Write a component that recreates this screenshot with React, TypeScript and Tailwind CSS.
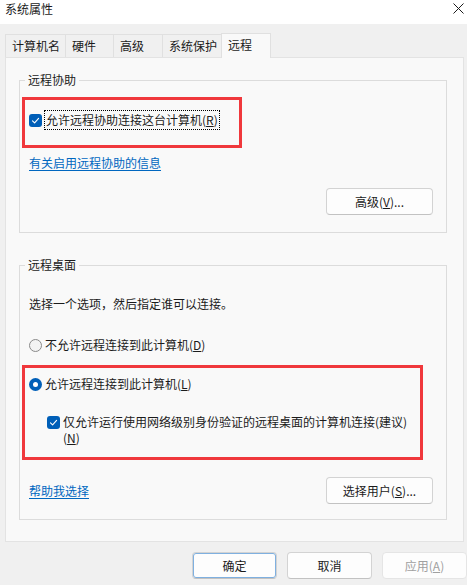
import React from 'react';

const Mn: React.FC<{ k: string }> = ({ k }) => (
  <>
    (<span className="underline underline-offset-[1px]">{k}</span>)
  </>
);

const CheckBox: React.FC<{ className?: string }> = ({ className = '' }) => (
  <span className={`w-[13px] h-[13px] shrink-0 rounded-[3px] bg-[#005fb8] flex items-center justify-center ${className}`}>
    <svg width="9" height="9" viewBox="0 0 9 9" fill="none">
      <path d="M1.5 4.8 L3.6 6.8 L7.6 2.4" stroke="white" strokeWidth="1.1" strokeLinecap="round" strokeLinejoin="round" />
    </svg>
  </span>
);

const Radio: React.FC<{ checked?: boolean }> = ({ checked }) =>
  checked ? (
    <span className="w-[13px] h-[13px] shrink-0 rounded-full bg-[#005fb8] flex items-center justify-center">
      <span className="w-[5px] h-[5px] rounded-full bg-white" />
    </span>
  ) : (
    <span className="w-[13px] h-[13px] shrink-0 rounded-full border border-[#8a8a8a] bg-[#f3f3f3]" />
  );

const Btn: React.FC<{ children: React.ReactNode; className?: string }> = ({ children, className = '' }) => (
  <div
    className={`h-[27px] flex items-center justify-center rounded-[4px] border border-[#d3d3d3] border-b-[#c2c2c2] bg-[#fdfdfd] text-[#1b1b1b] ${className}`}
  >
    {children}
  </div>
);

const Group: React.FC<{ title: string; children: React.ReactNode; className?: string }> = ({ title, children, className = '' }) => (
  <fieldset className={`w-[428px] border border-[#dcdcdc] ${className}`}>
    <legend className="ml-[5px] px-[3px] leading-[16px]">{title}</legend>
    {children}
  </fieldset>
);

const tabs = [
  { label: '计算机名', w: 'w-[61px]' },
  { label: '硬件', w: 'w-[49px]' },
  { label: '高级', w: 'w-[50px]' },
  { label: '系统保护', w: 'w-[60px]' },
];

export default function App() {
  return (
    <div className="w-[467px] h-[585px] overflow-hidden bg-[#f0f0f0] text-[12px] leading-[16px] text-[#1b1b1b] font-['Noto_Sans_CJK_SC','Noto_Sans',sans-serif]">
      {/* title bar */}
      <div className="h-[24px] bg-white flex items-start justify-between pl-[5px] pr-[3px]">
        <span className="mt-[1px]">系统属性</span>
        <svg width="11" height="11" viewBox="0 0 11 11" className="mt-[3px]">
          <path d="M0.5 0.5 L10.5 10.5 M10.5 0.5 L0.5 10.5" stroke="#1b1b1b" strokeWidth="1" />
        </svg>
      </div>

      {/* tabs */}
      <div className="mt-[9px] h-[24px] px-[5px] flex items-end">
        {tabs.map(t => (
          <div
            key={t.label}
            className={`${t.w} h-[23px] -mr-px pl-[6px] pt-[3px] border border-b-0 border-[#e0e0e0] bg-[#f0f0f0]`}
          >
            {t.label}
          </div>
        ))}
        <div className="relative z-10 w-[50px] h-[25px] -mb-px pl-[6px] pt-[3px] border border-b-0 border-[#e0e0e0] bg-[#f9f9f9]">
          远程
        </div>
      </div>

      {/* page */}
      <div className="mx-[5px] w-[459px] h-[485px] border border-[#e3e3e3] bg-[#f9f9f9] pl-[13px] pt-[14px]">
        <Group title="远程协助">
          <div className="mt-[9px] ml-[2px] w-[220px] border-[3px] border-[#f0383c] pl-[4px] pt-[10px] pb-[15px]">
            <div className="h-[20px] flex items-center">
              <CheckBox />
              <span className="ml-[2px] h-[20px] flex items-center px-[1px] border border-dotted border-black">
                允许远程协助连接这台计算机<Mn k="R" />
              </span>
            </div>
          </div>
          <div className="mt-[7px] pl-[9px]">
            <span className="text-[#0067c0] underline underline-offset-2">有关启用远程协助的信息</span>
          </div>
          <div className="mt-[17px] pb-[17px] pr-[13px] flex justify-end">
            <Btn className="w-[107px]">
              高级<Mn k="V" />...
            </Btn>
          </div>
        </Group>

        <Group title="远程桌面" className="mt-[24px]">
          <div className="mt-[23px] pl-[9px]">选择一个选项，然后指定谁可以连接。</div>
          <div className="mt-[23px] pl-[9px] h-[20px] flex items-center gap-[3px]">
            <Radio />
            <span>
              不允许远程连接到此计算机<Mn k="D" />
            </span>
          </div>
          <div className="mt-[10px] ml-[2px] w-[401px] border-[3px] border-[#f0383c] pl-[4px] pt-[6px] pb-[11px]">
            <div className="h-[20px] flex items-center gap-[3px]">
              <Radio checked />
              <span>
                允许远程连接到此计算机<Mn k="L" />
              </span>
            </div>
            <div className="mt-[20px] ml-[18px] flex items-start gap-[3px]">
              <CheckBox className="mt-[2px]" />
              <span>
                仅允许运行使用网络级别身份验证的远程桌面的计算机连接(建议)
                <br />
                <Mn k="N" />
              </span>
            </div>
          </div>
          <div className="mt-[17px] pb-[15px] pl-[9px] pr-[13px] flex items-center justify-between">
            <span className="text-[#0067c0] underline underline-offset-2">帮助我选择</span>
            <Btn className="w-[107px]">
              选择用户<Mn k="S" />...
            </Btn>
          </div>
        </Group>
      </div>

      {/* dialog buttons */}
      <div className="mt-[10px] pl-[192px] flex gap-[10px]">
        <Btn className="w-[85px] shrink-0 border-[#0067c0] border-b-[#0067c0] shadow-[inset_0_0_0_1px_#7fb0e0]">确定</Btn>
        <Btn className="w-[85px] shrink-0">取消</Btn>
        <Btn className="w-[85px] shrink-0 bg-[#f5f5f5] border-[#e5e5e5] border-b-[#e5e5e5] text-[#a0a0a0]">
          应用<Mn k="A" />
        </Btn>
      </div>
    </div>
  );
}
